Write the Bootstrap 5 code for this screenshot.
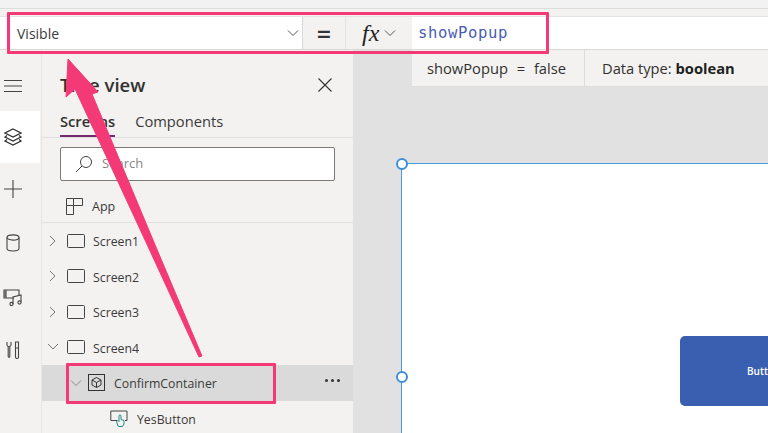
<!DOCTYPE html>
<html lang="en">
<head>
<meta charset="utf-8">
<title>Tree view</title>
<link href="https://cdn.jsdelivr.net/npm/bootstrap@5.3.0/dist/css/bootstrap.min.css" rel="stylesheet">
<style>
html,body{margin:0;height:433px;width:768px;overflow:hidden;background:#f3f2f1}
body{font-family:"Open Sans","Noto Sans",sans-serif;color:#3b3a39;position:relative}
svg{display:block;flex:none}
.strip{height:9px;background:#f2f2f2;border-bottom:1px solid #dcdcdc}
.fbar{height:41px;padding-top:7px;background:#f3f2f1}
.fbar-in{height:34px;background:#fff;border-top:1px solid #e4e4e4;border-bottom:1px solid #d8d8d8}
.prop{width:295px;margin-left:8px;padding:0 3px 0 9px;font-size:14px;border-right:1px solid #d9d9d9}
.eq{width:42px;background:#f3f2f1;font-size:25px;line-height:1;font-weight:600;color:#333}
.fx{width:67px;background:#f3f2f1;border-left:1px solid #e3e3e3;padding-left:16px;gap:5px}
.fx i{font-family:"Liberation Serif",serif;font-size:24px;color:#222;line-height:1}
.code{font-family:"DejaVu Sans Mono",monospace;font-size:15.6px;color:#4a5db0;padding:1px 0 0 6px;letter-spacing:.6px}
.work{height:383px}
.rail{width:42px;border-right:1px solid #e8e7e6;background:#f3f2f1;padding-top:10px}
.rail-btn{width:40px;height:52px;padding-left:3px}
.rail-btn.on{background:#fff}
.panel{width:311px;background:#f3f2f1;padding-top:20px}
.ttl{padding:0 21px 0 18px;height:30px}
.ttl h2{font-size:18.5px;font-weight:600;margin:0;color:#323130}
.tabs{margin-top:9px;padding-left:18px;height:29px;border-bottom:1px solid #e1dfdd;gap:20px;font-size:14.7px}
.tabs span{height:28px;padding-top:1px}
.tabs .act{font-weight:600;border-bottom:2px solid #742774;color:#323130}
.srch{margin:9px 0 0 18px;width:275px;height:34px;background:#fff;border:1px solid #7a7a7a;border-radius:2px;padding-left:14px;gap:9px;font-size:13px;color:#8a8886}
.approw{height:42px;padding:9px 0 0 24px;gap:9px;font-size:12.5px;border-bottom:1px solid #e1dfdd}
.approw span{padding-top:3px}
.tree{font-size:12.3px}
.node{height:35.5px;padding-left:6px;gap:5px}
.node .ico{width:14px}
.node .lbl{margin-left:3px;padding-top:3px}
.sel{background:#dadada;padding-left:28px;gap:6px;position:relative}
.dots{position:absolute;right:13px;top:14px;gap:3px}
.dots b{width:3px;height:3px;background:#333;border-radius:50%}
.kid{padding-left:68px;gap:6px}
.kid .lbl{margin-left:1px}
.stage{flex:1;background:#e1e1e1;position:relative}
.hint{position:absolute;left:59px;top:0;right:0;height:37px;background:#f3f2f1;border-bottom:1px solid #dedede;font-size:14.7px;color:#323130}
.hint div:first-child{width:173px;padding-left:15px;border-right:1px solid #dcdcdc;height:36px;word-spacing:5px}
.hint div:last-child{padding-left:17px}
.hint b{font-weight:700;color:#201f1e}
.board{position:absolute;left:48px;top:113px;right:-5px;bottom:-5px;background:#fff;border:1px solid #4a9ade}
.hnd{position:absolute;width:12px;height:12px;border-radius:50%;background:#fff;border:2px solid #3f8fd8}
.h1{left:-6px;top:-6px}.h2{left:-6px;top:207px}
.pbtn{position:absolute;width:100px;height:70px;background:#3a5fb0;border-radius:5px;color:#fff;font-size:10px;font-weight:600;padding:28px 0 0 67px}
.hilite{position:absolute;border:3px solid #f33a76;pointer-events:none;border-radius:1px}
.m1{left:7px;top:12px;width:542px;height:42px}
.m2{left:66px;top:363px;width:210px;height:41px}
.arrow{position:absolute;left:0;top:0}
</style>
</head>
<body>
<div class="strip"></div>
<div class="fbar">
  <div class="fbar-in d-flex align-items-stretch">
    <div class="prop d-flex align-items-center justify-content-between">
      <span>Visible</span>
      <svg width="12" height="8" viewBox="0 0 12 8"><path d="M1 1.5 6 6.5 11 1.5" fill="none" stroke="#555" stroke-width="1"/></svg>
    </div>
    <div class="eq d-flex align-items-center justify-content-center">=</div>
    <div class="fx d-flex align-items-center"><i>fx</i>
      <svg width="12" height="8" viewBox="0 0 12 8"><path d="M1 1.5 6 6.5 11 1.5" fill="none" stroke="#555" stroke-width="1"/></svg>
    </div>
    <div class="code d-flex align-items-center">showPopup</div>
  </div>
</div>
<div class="work d-flex">
  <nav class="rail">
    <div class="rail-btn d-flex align-items-center" style="height:51px">
      <svg width="20" height="14" viewBox="0 0 20 14"><path d="M1 1.5H19M1 7H19M1 12.5H19" stroke="#444" stroke-width="1.1"/></svg>
    </div>
    <div class="rail-btn on d-flex align-items-center" style="padding-left:4px">
      <svg width="18" height="18" viewBox="0 0 18 18" fill="none" stroke="#333" stroke-width="1.3"><path d="M9 1 17 5 9 9 1 5Z"/><path d="M3 7.5 1 9 9 13 17 9 15 7.5"/><path d="M3 11.5 1 13 9 17 17 13 15 11.5"/></svg>
    </div>
    <div class="rail-btn d-flex align-items-center">
      <svg width="20" height="20" viewBox="0 0 20 20"><path d="M10 1V19M1 10H19" stroke="#444" stroke-width="1.1"/></svg>
    </div>
    <div class="rail-btn d-flex align-items-center" style="height:56px;padding-left:6px">
      <svg width="14" height="18" viewBox="0 0 14 18" fill="none" stroke="#444" stroke-width="1.1"><ellipse cx="7" cy="3.5" rx="6" ry="2.6"/><path d="M1 3.5V14.5C1 16 3.5 17 7 17S13 16 13 14.5V3.5"/></svg>
    </div>
    <div class="rail-btn d-flex align-items-center" style="height:53px">
      <svg width="20" height="18" viewBox="0 0 20 18" fill="none" stroke="#444" stroke-width="1.1"><path d="M11 9H1V1H16V6"/><path d="M3 1V9M1 3H3M1 5H3M1 7H3"/><path d="M10 15V8L18 6V13"/><circle cx="8.5" cy="15" r="1.6"/><circle cx="16.5" cy="13.5" r="1.6"/></svg>
    </div>
    <div class="rail-btn d-flex align-items-center" style="padding-left:6px">
      <svg width="14" height="18" viewBox="0 0 14 18" fill="none" stroke="#444" stroke-width="1.1"><path d="M1 1V4C1 6 5 6 5 4V1M2.2 6V15.5A.8.8 0 0 0 3.8 15.5V6"/><path d="M9.5 1H12.5V7H9.5ZM9.5 7H12.5V16A1.5 1.5 0 0 1 9.5 16Z"/></svg>
    </div>
  </nav>
  <aside class="panel">
    <div class="ttl d-flex align-items-center justify-content-between">
      <h2>Tree view</h2>
      <svg width="14" height="14" viewBox="0 0 14 14"><path d="M.5.5 13.5 13.5M13.5.5.5 13.5" stroke="#333" stroke-width="1.1"/></svg>
    </div>
    <div class="tabs d-flex"><span class="act">Screens</span><span>Components</span></div>
    <div class="srch d-flex align-items-center">
      <svg width="18" height="18" viewBox="0 0 18 18" fill="none" stroke="#444" stroke-width="1"><circle cx="11" cy="7" r="5.5"/><path d="M7 11 1 17"/></svg>
      <span>Search</span>
    </div>
    <div class="approw d-flex align-items-center">
      <svg width="17" height="17" viewBox="0 0 17 17" fill="none" stroke="#444" stroke-width="1"><path d="M.5.5H7.5V7.5H.5ZM.5 7.5H7.5V16.5H.5ZM7.5.5H16.5V7.5H7.5Z"/></svg>
      <span>App</span>
    </div>
    <div class="tree">
      <div class="node d-flex align-items-center">
        <svg class="ico" width="14" height="12" viewBox="0 0 14 12"><path d="M2 1 7 6 2 11" fill="none" stroke="#777"/></svg>
        <svg width="18" height="14" viewBox="0 0 18 14"><rect x=".5" y=".5" width="17" height="13" rx="1" fill="none" stroke="#444"/></svg>
        <span class="lbl">Screen1</span>
      </div>
      <div class="node d-flex align-items-center">
        <svg class="ico" width="14" height="12" viewBox="0 0 14 12"><path d="M2 1 7 6 2 11" fill="none" stroke="#777"/></svg>
        <svg width="18" height="14" viewBox="0 0 18 14"><rect x=".5" y=".5" width="17" height="13" rx="1" fill="none" stroke="#444"/></svg>
        <span class="lbl">Screen2</span>
      </div>
      <div class="node d-flex align-items-center">
        <svg class="ico" width="14" height="12" viewBox="0 0 14 12"><path d="M2 1 7 6 2 11" fill="none" stroke="#777"/></svg>
        <svg width="18" height="14" viewBox="0 0 18 14"><rect x=".5" y=".5" width="17" height="13" rx="1" fill="none" stroke="#444"/></svg>
        <span class="lbl">Screen3</span>
      </div>
      <div class="node d-flex align-items-center">
        <svg class="ico" width="14" height="12" viewBox="0 0 14 12"><path d="M0 3 5 8 10 3" fill="none" stroke="#777"/></svg>
        <svg width="18" height="14" viewBox="0 0 18 14"><rect x=".5" y=".5" width="17" height="13" rx="1" fill="none" stroke="#444"/></svg>
        <span class="lbl">Screen4</span>
      </div>
      <div class="node sel d-flex align-items-center">
        <svg width="12" height="8" viewBox="0 0 12 8"><path d="M1 1.5 6 6.5 11 1.5" fill="none" stroke="#888"/></svg>
        <svg width="17" height="17" viewBox="0 0 17 17" fill="none" stroke="#333"><rect x=".5" y=".5" width="16" height="16"/><path d="M8.5 3.5 13 6V11L8.5 13.5 4 11V6ZM4 6 8.5 8.5 13 6M8.5 8.5V13.5"/></svg>
        <span class="lbl">ConfirmContainer</span>
        <div class="dots d-flex"><b></b><b></b><b></b></div>
      </div>
      <div class="node kid d-flex align-items-center">
        <svg width="20" height="17" viewBox="0 0 20 17" fill="none"><path d="M7 10.5H.8V1H17V10.5H15" stroke="#444"/><path d="M8 16 6.5 11.5 8 10.5 9 11.5V6A1 1 0 0 1 11 6V9.5L14 10.5V14L12.5 16.5H9Z" stroke="#1f8a8a" fill="#f3f2f1"/></svg>
        <span class="lbl">YesButton</span>
      </div>
    </div>
  </aside>
  <main class="stage">
    <div class="hint d-flex align-items-center">
      <div class="d-flex align-items-center">showPopup = false</div>
      <div>Data type: <b>boolean</b></div>
    </div>
    <div class="board">
      <span class="hnd h1"></span><span class="hnd h2"></span>
    </div>
    <div class="pbtn" style="left:327px;top:286px">Button</div>
  </main>
</div>
<div class="hilite m1"></div>
<div class="hilite m2"></div>
<svg class="arrow" width="768" height="433" viewBox="0 0 768 433"><path d="M68 59 98 92 92 94 153 240 202 356 199 357 145 240 75 89 66 97Z" fill="#f33a76" stroke="#f33a76" stroke-linejoin="round"/></svg>
</body>
</html>
